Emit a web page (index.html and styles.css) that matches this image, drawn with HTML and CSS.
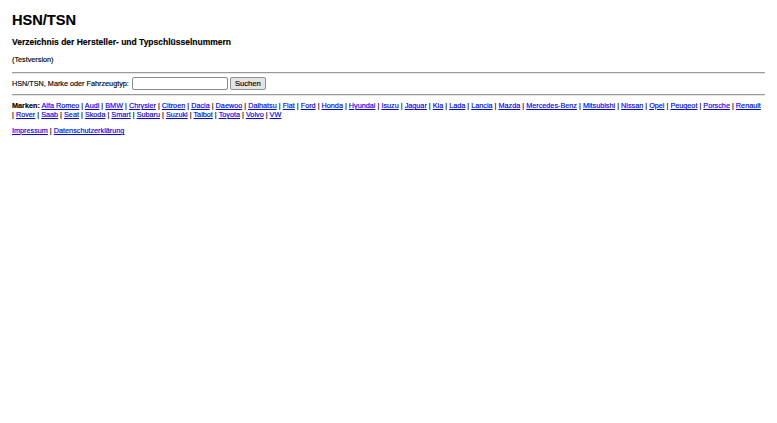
FILE: index.html
```html
<!DOCTYPE html>
<html lang="de">
<head>
<meta charset="utf-8">
<title>HSN/TSN</title>
<link rel="stylesheet" href="styles.css">
</head>
<body>
<h1 class="title">HSN/TSN</h1>
<h2 class="subtitle">Verzeichnis der Hersteller- und Typschlüsselnummern</h2>
<p class="note">(Testversion)</p>
<hr class="rule">
<form class="search">
<label class="search-label" for="q">HSN/TSN, Marke oder Fahrzeugtyp:</label>
<input class="search-input" id="q" type="text">
<button class="search-btn" type="button">Suchen</button>
</form>
<hr class="rule rule-low">
<p class="brands"><b>Marken:</b> <a href="#">Alfa Romeo</a> | <a href="#">Audi</a> | <a href="#">BMW</a> | <a href="#">Chrysler</a> | <a href="#">Citroen</a> | <a href="#">Dacia</a> | <a href="#">Daewoo</a> | <a href="#">Daihatsu</a> | <a href="#">Fiat</a> | <a href="#">Ford</a> | <a href="#">Honda</a> | <a href="#">Hyundai</a> | <a href="#">Isuzu</a> | <a href="#">Jaguar</a> | <a href="#">Kia</a> | <a href="#">Lada</a> | <a href="#">Lancia</a> | <a href="#">Mazda</a> | <a href="#">Mercedes-Benz</a> | <a href="#">Mitsubishi</a> | <a href="#">Nissan</a> | <a href="#">Opel</a> | <a href="#">Peugeot</a> | <a href="#">Porsche</a> | <a href="#">Renault</a> | <a href="#">Rover</a> | <a href="#">Saab</a> | <a href="#">Seat</a> | <a href="#">Skoda</a> | <a href="#">Smart</a> | <a href="#">Subaru</a> | <a href="#">Suzuki</a> | <a href="#">Talbot</a> | <a href="#">Toyota</a> | <a href="#">Volvo</a> | <a href="#">VW</a></p>
<p class="footer"><a href="#">Impressum</a> | <a href="#">Datenschutzerklärung</a></p>
</body>
</html>
```
FILE: styles.css
```css
html, body {
  background: #ffffff;
}
body {
  margin: 0;
  padding: 10px 12px;
  font-family: "Liberation Sans", Arial, sans-serif;
  font-size: 7.25px;
  line-height: 9px;
  color: #000000;
  -webkit-text-stroke: 0.15px currentColor;
}
.title {
  font-size: 14.6px;
  line-height: 17px;
  font-weight: bold;
  margin: 2px 0 8px 0;
}
.subtitle {
  font-size: 8.5px;
  line-height: 11px;
  font-weight: bold;
  margin: 0 0 7px 0;
}
.note {
  margin: 0 0 7px 0;
  line-height: 10px;
}
.rule {
  border: 0;
  border-top: 1px solid #9a9a9a;
  border-bottom: 1px solid #e6e6e6;
  height: 0;
  margin: 0;
}
.search {
  display: flex;
  align-items: center;
  gap: 2px;
  margin: 3px 0 4px 0;
}
.search-label {
  margin-right: 1px;
}
.search-input {
  width: 96px;
  height: 13px;
  box-sizing: border-box;
  border: 1px solid #8a8a8a;
  border-radius: 2px;
  padding: 0 2px;
  font-size: 7.3px;
  margin: 0;
  background: #ffffff;
}
.search-btn {
  width: 36px;
  height: 13px;
  box-sizing: border-box;
  border: 1px solid #8f8f8f;
  border-radius: 2px;
  background: #e4e4e4;
  padding: 0;
  font-family: "Liberation Sans", Arial, sans-serif;
  font-size: 7.6px;
  color: #000000;
  -webkit-text-stroke: 0.15px currentColor;
  margin: 0;
}
.brands {
  margin: 5px 3px 7px 0;
}
a {
  color: #0000ee;
}
.footer {
  margin: 0;
}
```
